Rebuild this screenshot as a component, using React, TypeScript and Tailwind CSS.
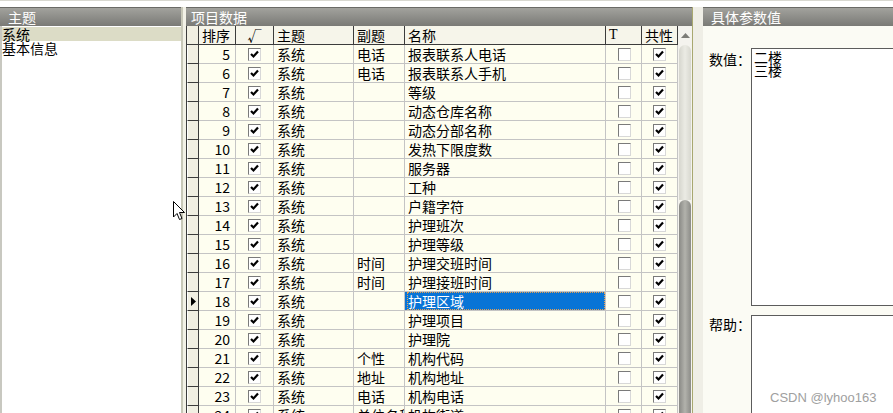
import React from "react";

const rows: [number, string, string][] = [
  [5, "电话", "报表联系人电话"],
  [6, "电话", "报表联系人手机"],
  [7, "", "等级"],
  [8, "", "动态仓库名称"],
  [9, "", "动态分部名称"],
  [10, "", "发热下限度数"],
  [11, "", "服务器"],
  [12, "", "工种"],
  [13, "", "户籍字符"],
  [14, "", "护理班次"],
  [15, "", "护理等级"],
  [16, "时间", "护理交班时间"],
  [17, "时间", "护理接班时间"],
  [18, "", "护理区域"],
  [19, "", "护理项目"],
  [20, "", "护理院"],
  [21, "个性", "机构代码"],
  [22, "地址", "机构地址"],
  [23, "电话", "机构电话"],
  [24, "单位名称", "机构街道"],
];

const Check = ({ on }: { on: boolean }) => (
  <div className="w-[13px] h-[13px] border-t border-l border-[#7a7a7a] border-r border-b border-r-[#d8d8d8] border-b-[#d8d8d8] bg-white flex items-center justify-center">
    {on && (
      <svg width="9" height="9" viewBox="0 0 9 9">
        <polyline points="1,4 3.5,6.5 8,1.5" fill="none" stroke="#000" strokeWidth="2.2" />
      </svg>
    )}
  </div>
);

const PanelHeader = ({ title, pad }: { title: string; pad: string }) => (
  <div className={`h-[19px] shrink-0 bg-linear-to-b from-[#a2a29d] to-[#7a7a76] border-t border-[#6a6a66] text-white text-[14px] leading-[18px] ${pad}`}>
    {title}
  </div>
);

const cell = "h-[19px] border-r border-b border-[#c4c4c4] overflow-hidden whitespace-nowrap leading-[18px]";
const head = "h-[19px] border-r border-b border-[#3c3c3c] bg-[#f6f5ea] overflow-hidden whitespace-nowrap leading-[18px] px-[3px]";

export default function App() {
  return (
    <div className="w-[893px] h-[413px] overflow-hidden relative bg-white font-['Noto_Sans_CJK_SC',sans-serif] text-[14px] text-black flex flex-col">
      <div className="h-[7px] shrink-0 border-t border-[#d8d8d0] bg-white" />
      <div className="flex flex-1 min-h-0">
        {/* 主题 */}
        <div className="w-[183px] flex flex-col border-r-2 border-[#c8c8b8]">
          <PanelHeader title="主题" pad="pl-[8px]" />
          <div className="flex-1 bg-white border-l-2 border-[#c8c8c0] pt-[1px]">
            <div className="h-[14px] leading-[14px] bg-[#dcdcc6]">系统</div>
            <div className="h-[14px] leading-[14px]">基本信息</div>
          </div>
        </div>
        <div className="w-[3px] bg-[#f2f1e6]" />

        {/* 项目数据 */}
        <div className="w-[507px] flex flex-col border-r border-[#a8a870]">
          <PanelHeader title="项目数据" pad="pl-[5px]" />
          <div className="flex flex-1 min-h-0 border-l border-[#3c3c3c]">
            <div className="w-[491px] overflow-hidden bg-[#fefef0]">
              <div className="grid grid-cols-[12px_37px_38px_80px_51px_201px_36px_36px]">
                <div className="h-[19px] border-r border-b border-[#3c3c3c] bg-[#f1efe2]" />
                <div className={head}>排序</div>
                <div className={`${head} text-center`}>√</div>
                <div className={head}>主题</div>
                <div className={head}>副题</div>
                <div className={head}>名称</div>
                <div className={`${head} font-['Liberation_Serif',serif]`}>T</div>
                <div className={head}>共性</div>

                {rows.map(([n, sub, name]) => {
                  const sel = n === 18;
                  return (
                    <React.Fragment key={n}>
                      <div className="h-[19px] border-r border-b border-[#3c3c3c] border-l border-l-white bg-[#f1efe2] flex items-center justify-center">
                        {sel && (
                          <svg width="5" height="9" viewBox="0 0 5 9">
                            <polygon points="0,0 5,4.5 0,9" fill="#000" />
                          </svg>
                        )}
                      </div>
                      <div className={`${cell} text-right pr-[5px]`}>{n}</div>
                      <div className={`${cell} flex items-center justify-center`}>
                        <Check on />
                      </div>
                      <div className={`${cell} pl-[3px]`}>系统</div>
                      <div className={`${cell} pl-[3px]`}>{sub}</div>
                      {sel ? (
                        <div className={`${cell} pl-[2px] bg-[#0874d6] text-white`}>
                          <div className="h-full border border-dotted border-[#e8a050] leading-[16px]">护理区域</div>
                        </div>
                      ) : (
                        <div className={`${cell} pl-[3px]`}>{name}</div>
                      )}
                      <div className={`${cell} flex items-center justify-center pl-[2px]`}>
                        <Check on={false} />
                      </div>
                      <div className={`${cell} flex items-center justify-center`}>
                        <Check on />
                      </div>
                    </React.Fragment>
                  );
                })}
              </div>
            </div>

            {/* scrollbar */}
            <div className="w-[14px] flex flex-col bg-[#f4f3ee]">
              <div className="h-[19px] shrink-0 flex items-center justify-center">
                <svg width="9" height="5" viewBox="0 0 9 5">
                  <polygon points="0,5 4.5,0 9,5" fill="#7c7c78" />
                </svg>
              </div>
              <div className="h-[155px] shrink-0 mx-[1px] rounded-t-[6px] bg-linear-to-r from-[#d6d6ce] via-[#ebebe4] to-[#d8d8d0]" />
              <div className="flex-1 mx-[1px] rounded-t-[6px] bg-linear-to-r from-[#8a8a86] via-[#b2b2ac] to-[#8c8c88]" />
            </div>
          </div>
        </div>
        <div className="w-[10px] bg-[#efeee6]" />

        {/* 具体参数值 */}
        <div className="flex-1 flex flex-col bg-[#fbfbf4]">
          <PanelHeader title="具体参数值" pad="pl-[8px]" />
          <div className="flex flex-col pl-[6px] pt-[22px]">
            <div className="flex">
              <div className="w-[42px] leading-[16px] pt-[3px]">数值：</div>
              <div className="h-[258px] flex-1 border border-r-0 border-[#5c5c5c] bg-white pl-[2px] pt-[2px] leading-[13px]">
                <div>二楼</div>
                <div>三楼</div>
              </div>
            </div>
            <div className="flex mt-[9px]">
              <div className="w-[42px] leading-[16px] pt-[1px]">帮助：</div>
              <div className="h-[120px] flex-1 border border-r-0 border-[#5c5c5c] bg-white" />
            </div>
          </div>
        </div>
      </div>

      <div className="absolute left-[770px] top-[388px] text-[13px] text-[#a0a0a0] font-['Liberation_Sans',sans-serif]">
        CSDN @lyhoo163
      </div>

      {/* mouse pointer */}
      <svg className="absolute left-[173px] top-[201px]" width="13" height="21" viewBox="0 0 13 21">
        <polygon points="0.5,0.5 0.5,16 4,12.5 6.5,18.5 9,17.5 6.5,11.5 11.5,11.5" fill="#fff" stroke="#000" strokeWidth="1" />
      </svg>
    </div>
  );
}
